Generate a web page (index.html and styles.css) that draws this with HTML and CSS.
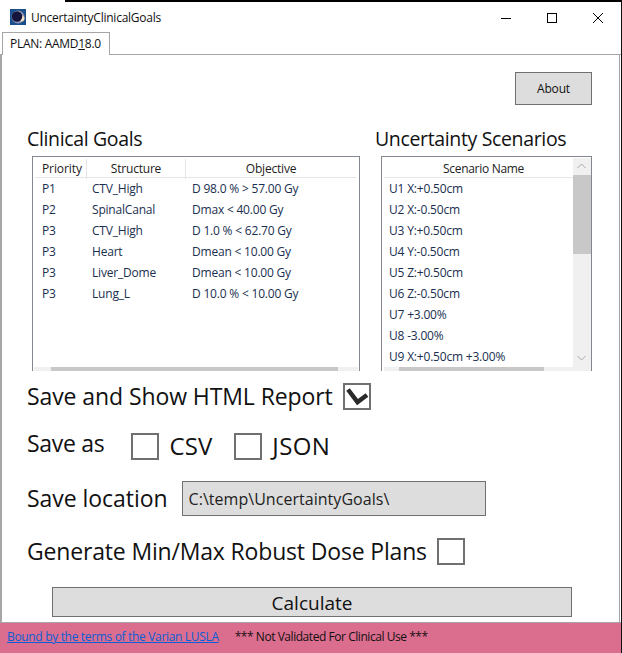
FILE: index.html
```html
<!DOCTYPE html>
<html lang="en">
<head>
<meta charset="utf-8">
<title>UncertaintyClinicalGoals</title>
<link rel="stylesheet" href="styles.css">
</head>
<body>
<div class="window">
  <header class="titlebar">
    <svg class="app-icon" width="16" height="16" viewBox="0 0 16 16">
      <rect width="16" height="16" fill="#1a4f8c"/>
      <circle cx="8" cy="8" r="6.500" fill="#8f93b0"/>
      <circle cx="11.500" cy="9.500" r="3" fill="#f4dfc0"/>
      <circle cx="7" cy="7.500" r="5.200" fill="#14143c"/>
    </svg>
    <span class="app-title">UncertaintyClinicalGoals</span>
    <div class="window-controls">
      <svg width="46" height="30" viewBox="0 0 46 30"><path d="M18 16.500h10" stroke="#000" fill="none"/></svg>
      <svg width="46" height="30" viewBox="0 0 46 30"><rect x="18.500" y="11.500" width="9" height="9" stroke="#000" fill="none"/></svg>
      <svg width="46" height="30" viewBox="0 0 46 30"><path d="M18 11l10 10M28 11l-10 10" stroke="#000" fill="none"/></svg>
    </div>
  </header>
  <div class="tabstrip"><div class="tab">PLAN: AAMD<u>1</u>8.0</div></div>
  <main class="panel">
    <div class="about-row"><button class="btn about">About</button></div>
    <div class="lists">
      <section class="goals">
        <h2>Clinical Goals</h2>
        <div class="listbox">
          <div class="goal-row head"><span>Priority</span><span>Structure</span><span>Objective</span></div>
          <div class="goal-row"><span>P1</span><span>CTV_High</span><span>D 98.0 % &gt; 57.00 Gy</span></div>
          <div class="goal-row"><span>P2</span><span>SpinalCanal</span><span>Dmax &lt; 40.00 Gy</span></div>
          <div class="goal-row"><span>P3</span><span>CTV_High</span><span>D 1.0 % &lt; 62.70 Gy</span></div>
          <div class="goal-row"><span>P3</span><span>Heart</span><span>Dmean &lt; 10.00 Gy</span></div>
          <div class="goal-row"><span>P3</span><span>Liver_Dome</span><span>Dmean &lt; 10.00 Gy</span></div>
          <div class="goal-row"><span>P3</span><span>Lung_L</span><span>D 10.0 % &lt; 10.00 Gy</span></div>
          <div class="hscroll goals-scroll"><i></i></div>
        </div>
      </section>
      <section class="scenarios">
        <h2>Uncertainty Scenarios</h2>
        <div class="listbox scen-box">
          <div class="scen-main">
            <div class="scen-head">Scenario Name</div>
            <div class="scen-row">U1 X:+0.50cm</div>
            <div class="scen-row">U2 X:-0.50cm</div>
            <div class="scen-row">U3 Y:+0.50cm</div>
            <div class="scen-row">U4 Y:-0.50cm</div>
            <div class="scen-row">U5 Z:+0.50cm</div>
            <div class="scen-row">U6 Z:-0.50cm</div>
            <div class="scen-row">U7 +3.00%</div>
            <div class="scen-row">U8 -3.00%</div>
            <div class="scen-row">U9 X:+0.50cm +3.00%</div>
            <div class="hscroll scen-scroll"><i></i></div>
          </div>
          <div class="vscroll">
            <svg width="17" height="17" viewBox="0 0 17 17"><path d="M4.500 10l4-4 4 4" stroke="#a8a8a8" fill="none"/></svg>
            <i></i>
            <svg class="down" width="17" height="17" viewBox="0 0 17 17"><path d="M4.500 6l4 4 4-4" stroke="#a8a8a8" fill="none"/></svg>
          </div>
        </div>
      </section>
    </div>
    <div class="opt opt-report">
      <span class="lbl">Save and Show HTML Report</span>
      <span class="check">
        <svg width="24" height="23" viewBox="0 0 24 23"><path d="M3 4.500l9.500 12.500 9.500-7" stroke="#2a2a2a" stroke-width="4.500" fill="none"/></svg>
      </span>
    </div>
    <div class="opt opt-as">
      <span class="save-as">Save as</span>
      <span class="check"></span><span class="fmt">CSV</span>
      <span class="check"></span><span class="fmt">JSON</span>
    </div>
    <div class="opt opt-loc">
      <span class="lbl">Save location</span>
      <div class="path">C:\temp\UncertaintyGoals\</div>
    </div>
    <div class="opt opt-minmax">
      <span class="lbl">Generate Min/Max Robust Dose Plans</span>
      <span class="check"></span>
    </div>
    <button class="btn calc">Calculate</button>
  </main>
  <footer class="status">
    <a href="#">Bound by the terms of the Varian LUSLA</a>
    <span>*** Not Validated For Clinical Use ***</span>
  </footer>
</div>
</body>
</html>
```
FILE: styles.css
```css
* { box-sizing: border-box; }
html, body { margin: 0; padding: 0; }
body { width: 622px; height: 653px; overflow: hidden; background: #fff; font-family: "Open Sans", "Noto Sans", sans-serif; color: #111; }
.window { width: 622px; height: 653px; display: flex; flex-direction: column; background: #fff; border-right: 1px solid #111; }

.titlebar { height: 32px; flex: none; display: flex; align-items: center; padding: 2px 0 0 10px; background: linear-gradient(#000, #000) no-repeat 65px 0 / 100% 2px #fff; }
.app-icon { flex: none; }
.app-title { margin-left: 5px; font-size: 12px; letter-spacing: -.25px; }
.window-controls { margin-left: auto; display: flex; }
.window-controls svg { display: block; }

.tabstrip { height: 23px; flex: none; display: flex; border-bottom: 1px solid #a6a6a6; padding-left: 2px; }
.tab { height: 23px; width: 108px; padding: 2px 0 0 7px; border: 1px solid #a6a6a6; border-bottom: 0; background: #fff; font-size: 12px; letter-spacing: -.28px; white-space: nowrap; }

.panel { flex: 1; display: flex; flex-direction: column; border-left: 2px solid #a6a6a6; border-right: 1px solid #a6a6a6; margin-right: 1px; }
.btn { display: block; background: #dddddd; border: 1px solid #707070; color: #111; font-family: inherit; padding: 0; }
.about-row { display: flex; justify-content: flex-end; padding: 17px 27px 0 0; }
.about { width: 77px; height: 33px; font-size: 12px; letter-spacing: -.2px; }

.lists { display: flex; margin-top: 21px; padding-left: 25px; }
.goals { width: 348px; }
.scenarios { width: 230px; }
h2 { margin: 0; font-weight: 400; font-size: 19.500px; line-height: 26px; letter-spacing: -.35px; height: 30px; }
.goals .listbox { margin-left: 5px; width: 328px; }
.scen-box { margin-left: 6px; width: 211px; }
.listbox { height: 215px; border: 1px solid #828790; border-bottom: 0; position: relative; display: flex; flex-direction: column; padding: 1px 2px 0; font-size: 12px; color: #1a2f4f; letter-spacing: -.2px; }

.goal-row { display: grid; grid-template-columns: 52px 99px 1fr; height: 21px; align-items: center; }
.goal-row span { padding-left: 5px; white-space: nowrap; }
.goal-row span:first-child { padding-left: 7px; }
.goal-row span:last-child { padding-left: 6px; }
.goal-row.head { color: #222; height: 20px; border-bottom: 1px solid #e5e5e5; margin-right: 1px; padding-top: 1px; }
.goal-row.head span { text-align: center; padding-left: 0; border-right: 1px solid #e5e5e5; height: 100%; line-height: 20px; }
.goal-row.head span:first-child { text-align: left; padding-left: 7px; letter-spacing: -.1px; }
.goal-row.head span:last-child { border-right: 0; padding-left: 0; }

.hscroll { position: absolute; bottom: 0; height: 4px; background: #f0f0f0; }
.hscroll i { position: absolute; top: 0; bottom: 0; background: #c8c8c8; }
.goals-scroll { left: 1px; right: 1px; }
.goals-scroll i { left: 17px; right: 20px; }

.scen-box { flex-direction: row; padding: 1px 0 0 2px; }
.scen-main { width: 189px; flex: none; position: relative; }
.scen-head { height: 20px; line-height: 22px; text-align: center; color: #222; border-bottom: 1px solid #e5e5e5; padding-left: 10px; letter-spacing: -.3px; }
.scen-row { height: 21px; line-height: 21px; padding-left: 5px; white-space: nowrap; }
.scen-scroll { left: 0; right: 0; }
.scen-scroll i { left: 15px; right: 29px; }
.vscroll { flex: 1; background: #f0f0f0; display: flex; flex-direction: column; }
.vscroll svg { display: block; flex: none; }
.vscroll i { display: block; height: 79px; background: #c8c8c8; }
.vscroll .down { margin-top: auto; margin-bottom: 4px; }

.opt { display: flex; align-items: center; padding-left: 25px; font-size: 23px; letter-spacing: -.05px; color: #111; white-space: nowrap; }
.lbl { margin-top: -2px; }
.opt-report { margin-top: 12px; height: 27px; letter-spacing: -.09px; }
.check { flex: none; width: 28px; height: 27px; border: 2px solid #707070; background: #fff; display: block; }
.check svg { display: block; }
.opt-report .check { margin-left: 10px; }
.opt-as { margin-top: 23px; height: 27px; }
.save-as { margin-right: 27px; margin-top: -7px; letter-spacing: -.3px; }
.fmt { margin: -2px 22px 0 10px; font-size: 24px; letter-spacing: .1px; }
.fmt:last-child { letter-spacing: .4px; }
.opt-loc { margin-top: 21px; height: 35px; }
.path { margin-left: 14px; width: 304px; height: 35px; background: #dddddd; border: 1px solid #707070; font-size: 16px; letter-spacing: .04px; line-height: 34px; padding-left: 6px; color: #222; }
.opt-minmax { margin-top: 22px; height: 27px; letter-spacing: -.17px; }
.opt-minmax .check { margin-left: 10px; }
.calc { margin: 22px 0 0 50px; width: 520px; height: 30px; padding-top: 2px; font-size: 19px; }

.status { height: 31px; flex: none; background: #db6d8e; border-top: 1px solid #a6a6a6; display: flex; align-items: center; padding: 0 0 3px 7px; font-size: 12px; letter-spacing: -.33px; gap: 16px; margin-top: auto; }
.status a { color: #0a5fd6; }
.status span { letter-spacing: -.45px; }
```
